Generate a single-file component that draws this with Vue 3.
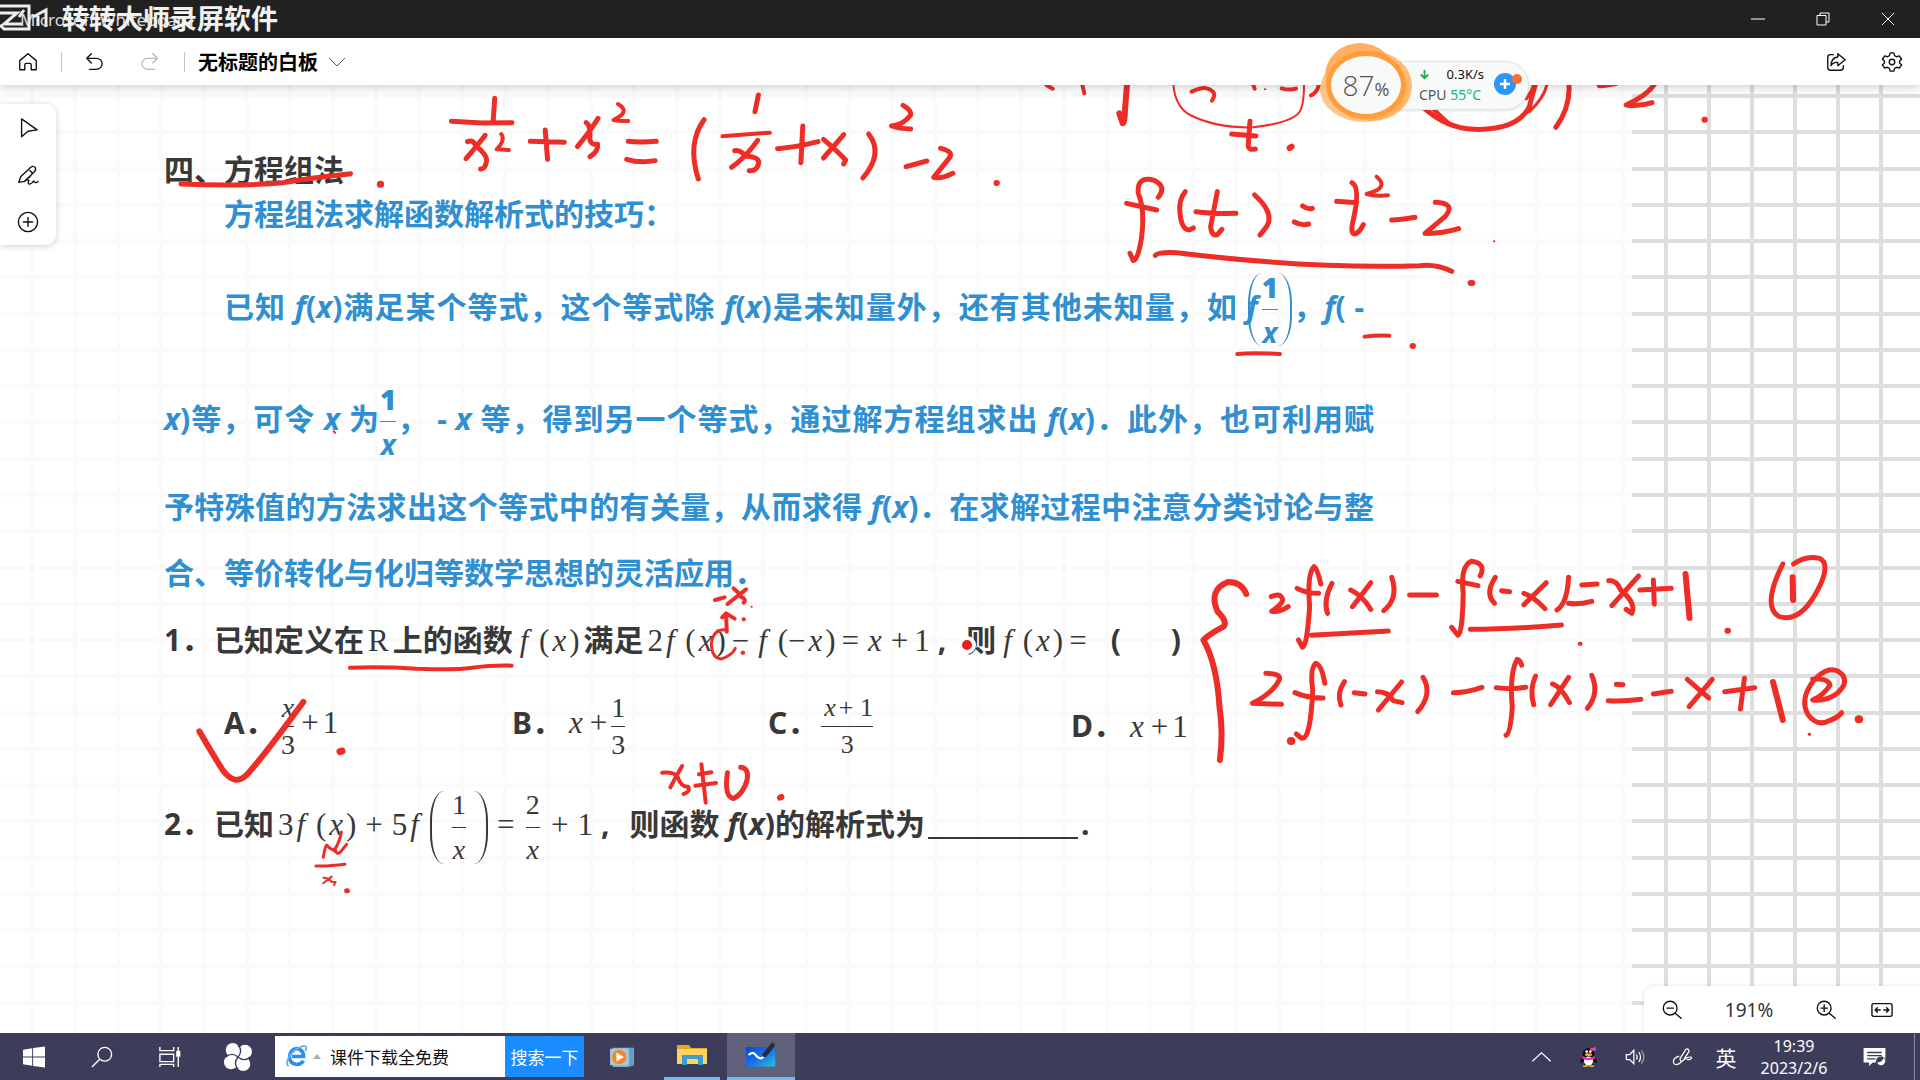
<script setup>
import {ref} from "vue";

const boardName = ref("无标题的白板")
const keyword = ref("课件下载全免费")

// 网格线
const cols = Array.from({length: 90}, (_, i) => 32 + i * 43)
const rows = Array.from({length: 60}, (_, i) => Math.round(11 + i * 36.27))

// 笔迹: 每组有自己的原点和比例, w 为笔宽, d 为路径
const inkList = [
  {
    origin: "translate(0 -85) scale(.3333)",
    strokes: [
      {w: 5, d: "M543 552Q720 560 850 548Q920 535 1052 521"},
      {w: 7, d: "M1141 553h1"},
    ]
  },
  {
    origin: "translate(440 -5) scale(.3827 .3333)",
    strokes: [
      {w: 5, d: "M30 124L110 129L188 128M143 55L139 122"},
      {w: 5, d: "M72 185Q88 178 93 197Q122 222 122 242Q118 268 106 267M118 166L98 195L68 236"},
      {w: 4, d: "M160 162Q172 180 148 208L180 210"},
      {w: 5, d: "M236 184L325 187M275 150L281 238"},
      {w: 5, d: "M382 128Q392 135 392 165Q388 196 412 193Q414 215 392 230M413 115Q395 150 359 200"},
      {w: 4, d: "M465 72Q500 95 453 120Q470 124 492 123"},
      {w: 5, d: "M492 184Q520 188 565 184M488 238Q520 250 562 242"},
      {w: 5, d: "M690 119Q645 190 675 297M832 45L823 95"},
      {w: 4, d: "M738 169L862 158"},
      {w: 5, d: "M770 212Q785 208 798 228Q830 230 833 245Q830 275 808 272M830 181Q800 230 762 262"},
      {w: 5, d: "M882 206Q930 202 988 185M948 138L943 248"},
      {w: 5, d: "M1002 178Q1040 215 1060 240L1055 252M1055 164L1002 234"},
      {w: 5, d: "M1120 162Q1160 220 1105 294"},
      {w: 5, d: "M1210 76Q1232 90 1230 105Q1210 135 1180 138Q1200 146 1230 147"},
      {w: 5, d: "M1218 260L1272 243"},
      {w: 5, d: "M1308 205Q1345 215 1330 235L1290 292Q1310 298 1340 280"},
      {w: 6, d: "M1454 309h1"},
    ]
  },
  {
    origin: "translate(1020 -25) scale(.3333)",
    strokes: [
      {w: 4, d: "M80 76L98 86M186 70L193 100M515 95Q545 80 560 85Q595 95 576 122M698 70L704 86"},
      {w: 6, d: "M322 60L315 150Q314 190 308 190L298 160"},
      {w: 2, d: "M460 72Q465 140 510 165Q590 205 700 202Q800 190 830 165Q853 150 852 70M735 88h1"},
      {w: 4, d: "M785 85Q810 92 828 86M897 74Q890 100 873 106"},
      {w: 5, d: "M690 184L685 255Q685 272 706 267M635 222L708 228"},
      {w: 6, d: "M809 264L815 260"},
      {w: 5, d: "M415 412Q440 380 405 362Q350 345 355 400Q375 450 365 530Q355 600 340 602L330 580M320 430L410 450"},
      {w: 5, d: "M496 395Q475 420 480 460Q485 510 508 510L520 504"},
      {w: 5, d: "M592 395L572 500Q575 530 592 524L606 508M528 455Q580 462 648 460"},
      {w: 5, d: "M704 405Q765 460 740 500L720 525"},
      {w: 5, d: "M848 438Q865 450 877 445M823 486Q845 498 866 492"},
      {w: 5, d: "M996 368Q1022 380 1000 480Q990 520 1003 522Q1018 520 1030 494M950 424L1010 428"},
      {w: 4, d: "M1070 350Q1110 385 1040 402Q1070 410 1104 406"},
      {w: 5, d: "M1115 480Q1140 480 1185 472"},
      {w: 5, d: "M1246 427Q1310 430 1275 470L1215 520Q1260 522 1316 506"},
      {w: 5, d: "M406 586Q415 575 470 578Q880 628 1200 617Q1250 612 1295 634"},
      {w: 6, d: "M1352 669h5"},
      {w: 2, d: "M1422 544h1"},
      {w: 4, d: "M652 882Q700 878 780 882M1034 830Q1070 825 1108 827"},
      {w: 6, d: "M1178 858h1"},
    ]
  },
  {
    origin: "translate(1300 -85) scale(.3954 .3333)",
    strokes: [
      {w: 5, d: "M312 322Q370 385 440 388Q550 392 580 320L598 240"},
      {w: 4, d: "M335 325L378 372M592 250Q590 275 572 295"},
      {w: 3, d: "M625 250Q620 290 580 335"},
      {w: 5, d: "M680 250Q685 320 647 382"},
      {w: 5, d: "M898 250Q880 285 825 315Q860 320 890 308M757 257Q770 258 800 250"},
      {w: 6, d: "M1023 359h1"},
    ]
  },
  {
    origin: "translate(150 495) scale(.3333)",
    strokes: [
      {w: 2, d: "M551 -446L556 -442"},
      {w: 4, d: "M600 263Q700 260 800 266Q920 270 960 264Q1030 255 1085 257"},
      {w: 6, d: "M148 454Q180 510 218 570Q255 620 290 585Q340 530 460 366"},
      {w: 7, d: "M570 515L576 513"},
      {w: 3, d: "M574 756Q570 785 552 812M520 832Q525 800 530 795Q545 815 556 805Q556 825 570 818L590 793"},
      {w: 3, d: "M498 858Q530 860 585 853"},
      {w: 2, d: "M520 893Q540 895 545 906L557 906L552 915M545 890L520 910"},
      {w: 5, d: "M590 932h2"},
    ]
  },
  {
    origin: "translate(640 495) scale(.3571 .3333)",
    strokes: [
      {w: 4, d: "M210 60L237 52M262 25Q275 35 282 50Q300 58 290 68M297 28L245 72"},
      {w: 2, d: "M312 80h1"},
      {w: 4, d: "M243 155L241 103M230 112L241 100L265 116"},
      {w: 4, d: "M290 118h1M287 218h2"},
      {w: 3, d: "M243 150Q205 145 200 190Q200 235 228 237Q260 225 267 205"},
      {w: 4, d: "M62 578Q95 575 105 590Q115 622 135 620Q142 635 122 642M118 558Q100 590 85 622"},
      {w: 4, d: "M155 617L213 609M165 583L200 577M172 553L184 668"},
      {w: 5, d: "M245 578Q235 650 262 656Q290 640 300 600Q306 565 282 562"},
      {w: 6, d: "M392 653L396 651"},
    ]
  },
  {
    origin: "translate(1190 455) scale(.4464 .3333)",
    strokes: [
      {w: 6, d: "M126 162Q115 125 85 126Q40 150 62 215Q85 245 75 260Q40 285 30 300Q60 370 66 500Q75 580 67 660"},
      {w: 5, d: "M182 170Q200 160 205 172Q215 185 183 214Q200 218 220 200"},
      {w: 5, d: "M293 132Q285 85 278 80Q262 100 268 200Q262 320 252 322L243 300M240 145Q260 160 288 160"},
      {w: 5, d: "M318 130Q298 180 308 220M360 150Q385 165 405 208M405 128L364 200M452 112Q468 175 434 212M492 165L552 165"},
      {w: 5, d: "M272 286L444 273"},
      {w: 5, d: "M650 108Q665 70 630 64Q605 80 612 160Q610 285 600 286L586 262M600 124L645 137"},
      {w: 5, d: "M684 112Q660 160 682 190M698 152L716 155M748 160Q770 170 795 206M798 128L748 194"},
      {w: 5, d: "M848 112Q845 190 822 210M878 135L912 132M848 190Q870 195 900 184"},
      {w: 5, d: "M628 268Q720 268 832 255"},
      {w: 4, d: "M873 311h2"},
      {w: 5, d: "M938 122Q955 120 965 150Q1000 190 990 220L977 208M1005 108L945 197M1008 150L1078 145M1038 120L1040 192"},
      {w: 6, d: "M1110 102L1119 234"},
      {w: 6, d: "M1204 272h1"},
      {w: 5, d: "M1328 72Q1280 200 1320 230Q1370 250 1410 140Q1435 70 1410 55Q1380 45 1352 72"},
      {w: 6, d: "M1350 112L1351 180"},
      {w: 5, d: "M170 400Q205 400 200 420Q185 460 140 490L205 493"},
      {w: 5, d: "M302 430Q295 375 282 370Q268 385 275 450Q270 600 250 595L238 582M235 458Q265 475 298 474"},
      {w: 5, d: "M346 425Q328 460 338 495M368 458L392 462M420 455Q445 455 455 482L475 488M474 426L422 510M522 412Q545 460 510 515"},
      {w: 5, d: "M590 458Q620 458 654 442"},
      {w: 5, d: "M743 376Q740 360 733 358Q715 400 722 500Q718 580 708 586M686 443Q720 450 752 442"},
      {w: 5, d: "M774 408Q760 450 770 494M812 432Q830 440 850 488M848 412L808 494M900 406Q918 460 890 505"},
      {w: 5, d: "M955 433L970 434M937 482Q970 485 1010 478M1038 462L1078 454"},
      {w: 5, d: "M1114 418L1162 474M1170 418L1118 500M1198 455L1265 443M1242 415L1233 507"},
      {w: 6, d: "M1306 426L1328 540"},
      {w: 5, d: "M1395 418Q1428 412 1434 435Q1420 465 1395 480Q1425 485 1450 460Q1475 430 1462 405Q1435 365 1395 425Q1365 480 1385 525Q1405 560 1430 543Q1450 535 1460 518"},
      {w: 8, d: "M1498 538h1"},
      {w: 8, d: "M226 603h1"},
      {w: 3, d: "M1387 583h1"},
    ]
  },
]
</script>

<template>
  <div class="app">
    <header class="title-bar">
      <span class="app-name">Microsoft Whiteboard</span>
      <div class="watermark">
        <svg class="watermark-logo" viewBox="0 0 50 30">
          <path d="M0 4H29V27H4L0 23M0 11H17L4 22H22M24 8L19 15M33 15L46 8V25M38 14V24" />
        </svg>
        <span>转转大师录屏软件</span>
      </div>
      <div class="window-btns">
        <button aria-label="最小化"><svg viewBox="0 0 16 16"><path d="M1 8H15" /></svg></button>
        <button aria-label="还原"><svg viewBox="0 0 16 16"><path d="M2 4.5H11V14H2ZM5 4.500V2H14V11H11" /></svg></button>
        <button aria-label="关闭"><svg viewBox="0 0 16 16"><path d="M2 2L14 14M14 2L2 14" /></svg></button>
      </div>
    </header>

    <nav class="tool-bar">
      <button class="tool" aria-label="主页">
        <svg viewBox="0 0 24 24"><path d="M3 10.500L12 3L21 10.500V20.500H15.500V15Q15.500 13.500 14 13.500H10Q8.500 13.500 8.500 15V20.500H3Z" /></svg>
      </button>
      <i class="split"></i>
      <button class="tool" aria-label="撤消">
        <svg viewBox="0 0 24 24"><path d="M8 3L3 8L8 13M3 8H13C22 8 22 20 13 20H6" /></svg>
      </button>
      <button class="tool disabled" aria-label="恢复" disabled>
        <svg viewBox="0 0 24 24"><path d="M14 3L19 8L14 13M19 8H9C0 8 0 20 9 20H16" /></svg>
      </button>
      <i class="split"></i>
      <button class="board-name">
        {{boardName}}
        <svg viewBox="0 0 18 10"><path d="M1 1L9 9L17 1" /></svg>
      </button>
      <div class="tool-right">
        <button class="tool" aria-label="共享">
          <svg viewBox="0 0 24 24"><path d="M9 4H6Q3 4 3 7V18Q3 21 6 21H17Q20 21 20 18V16M14 3L22 9.500L14 16V12.500Q9 12 6.500 16Q7 7 14 6.500Z" /></svg>
        </button>
        <button class="tool" aria-label="设置">
          <svg viewBox="0 0 24 24"><path d="M10 2H14L14.800 5L17 6.300L20 5.400L22.500 9L20.200 11V13L22.500 15L20 18.600L17 17.700L14.800 19L14 22H10L9.200 19L7 17.700L4 18.600L1.500 15L3.800 13V11L1.500 9L4 5.400L7 6.300L9.200 5Z" /><circle cx="12" cy="12" r="3" /></svg>
        </button>
      </div>
    </nav>

    <main class="canvas">
      <svg class="grid">
        <line v-for="x in cols" :key="'c' + x" :x1="x" :x2="x" y1="0" y2="100%" />
        <line v-for="y in rows" :key="'r' + y" x1="0" x2="100%" :y1="y" :y2="y" />
      </svg>

      <article class="paper">
        <h1 class="row title">四、方程组法</h1>
        <h2 class="row tip indent">方程组法求解函数解析式的技巧：</h2>
        <div class="row tip line-a indent justify">已知 <i>f</i>(<i>x</i>)满足某个等式，这个等式除 <i>f</i>(<i>x</i>)是未知量外，还有其他未知量，如 <i>f</i><span class="paren"><span class="frac"><b>1</b><i>x</i></span></span>，<i>f</i>( -</div>
        <div class="row tip line-b justify"><i>x</i>)等，可令 <i>x</i> 为<span class="frac"><b>1</b><i>x</i></span>， - <i>x</i> 等，得到另一个等式，通过解方程组求出 <i>f</i>(<i>x</i>)．此外，也可利用赋</div>
        <div class="row tip line-c justify">予特殊值的方法求出这个等式中的有关量，从而求得 <i>f</i>(<i>x</i>)．在求解过程中注意分类讨论与整</div>
        <div class="row tip line-e">合、等价转化与化归等数学思想的灵活应用．</div>

        <div class="row question line-f">
          <span class="num">1．</span>已知定义在<span class="math">R</span>上的函数<span class="math"><i>f</i> (<i>x</i>)</span>满足<span class="math">2<i>f</i> (<i>x</i>)<s>−</s><i>f</i> (−<i>x</i>)<s>=</s><i>x</i><s>+</s>1</span><span class="comma">,</span>则<span class="math"><i>f</i> (<i>x</i>)<s>=</s></span><span class="blank">(</span>)
        </div>
        <div class="row options">
          <div>A．<span class="math"><span class="frac"><i>x</i><b>3</b></span><s>+</s>1</span></div>
          <div>B．<span class="math"><i>x</i><s>+</s><span class="frac"><b>1</b><b>3</b></span></span></div>
          <div>C．<span class="math"><span class="frac small"><span><i>x</i>+ 1</span><b>3</b></span></span></div>
          <div>D．<span class="math"><i>x</i><s>+</s>1</span></div>
        </div>
        <div class="row question line-d">
          <span class="num">2．</span>已知<span class="math">3<i>f</i> (<i>x</i>)<s>+</s>5<i>f</i> <span class="paren"><span class="frac"><b>1</b><i>x</i></span></span><s>=</s><span class="frac"><b>2</b><i>x</i></span><s>+</s>1</span><span class="comma">,</span>则函数 <i>f</i>(<i>x</i>)的解析式为<span class="fill"></span>.
        </div>
      </article>

      <svg class="ink">
        <g v-for="(item, i) in inkList" :key="i" :transform="item.origin">
          <path v-for="(s, k) in item.strokes" :key="k" :d="s.d" :stroke-width="s.w" vector-effect="non-scaling-stroke" />
        </g>
        <circle class="pen-dot" cx="967" cy="560" r="7" />
      </svg>

      <aside class="side-tools">
        <button class="tool" aria-label="选择"><svg viewBox="0 0 24 24"><path d="M5 2L22 14L12 15.500L5 21.500Z" /></svg></button>
        <button class="tool" aria-label="墨迹书写"><svg viewBox="0 0 24 24"><path d="M2 20L4 14L15 3.500Q18 1.500 20 4Q21 6 19 8.500L8 19ZM14 7L17 10M17 10L13 15M8 19Q12 16 13 18Q11 22 14 22Q17 21 18 18.500Q20 22 23 19" /></svg></button>
        <button class="tool" aria-label="创建"><svg viewBox="0 0 24 24"><circle cx="12" cy="12" r="10.500" /><path d="M12 7V17M7 12H17" /></svg></button>
      </aside>

      <div class="zoom-bar">
        <button class="tool" aria-label="缩小"><svg viewBox="0 0 24 24"><circle cx="10" cy="10" r="7.500" /><path d="M15.500 15.500L22 21M6.500 10H13.500" /></svg></button>
        <span class="zoom-value">191%</span>
        <button class="tool" aria-label="放大"><svg viewBox="0 0 24 24"><circle cx="10" cy="10" r="7.500" /><path d="M15.500 15.500L22 21M6.500 10H13.500M10 6.500V13.500" /></svg></button>
        <button class="tool" aria-label="适应屏幕"><svg viewBox="0 0 24 24"><rect x="1" y="5" width="22" height="14" rx="2" /><path d="M10 12H4.500M7 9.500L4.500 12L7 14.500M14 12H19.500M17 9.500L19.500 12L17 14.500" /></svg></button>
      </div>
    </main>

    <div class="monitor">
      <div class="monitor-pill">
        <div class="stat"><svg viewBox="0 0 12 12"><path d="M6 1V10M2 6L6 10L10 6" /></svg><span>0.3K/s</span></div>
        <div class="cpu">CPU <em>55°C</em></div>
      </div>
      <svg class="ball" viewBox="0 0 92 80">
        <ellipse cx="40" cy="33" rx="35" ry="33" fill="#ff9a3c" opacity=".8" />
        <ellipse cx="52" cy="43" rx="40" ry="35" fill="#ffa64d" opacity=".75" />
        <ellipse cx="44" cy="46" rx="44" ry="33" fill="#ffac58" opacity=".7" />
        <ellipse cx="46" cy="42" rx="40" ry="34" fill="#ff9d3a" />
        <ellipse cx="46" cy="42" rx="35" ry="29" fill="#f7faf9" />
      </svg>
      <div class="percent">87<small>%</small></div>
      <svg class="plus" viewBox="0 0 30 30">
        <circle cx="13" cy="16" r="11" fill="#2b95f8" />
        <path d="M13 11V21M8 16H18" stroke="#fff" stroke-width="2.500" />
        <circle cx="25" cy="11" r="5" fill="#ff6a35" />
      </svg>
    </div>

    <footer class="task-bar">
      <button class="task" aria-label="开始">
        <svg viewBox="0 0 24 24" fill="#fff"><path d="M0 4L10 2.500V11.500H0ZM11 2.300L24 .5V11.500H11ZM0 12.500H10V21.500L0 20ZM11 12.500H24V23.500L11 21.700Z" /></svg>
      </button>
      <button class="task" aria-label="搜索">
        <svg viewBox="0 0 24 24" class="line"><circle cx="15" cy="9" r="7.500" /><path d="M9.500 14.500L1 23" /></svg>
      </button>
      <button class="task" aria-label="任务视图">
        <svg viewBox="0 0 24 24" class="line"><path d="M1 1V5H16V1M1 9H16V17H1ZM1 23V20H16V23M21 1V23" /><rect x="19.500" y="6" width="3" height="5" fill="#fff" /></svg>
      </button>
      <button class="task" aria-label="浏览器">
        <svg class="clover" viewBox="0 0 32 32">
          <circle v-for="p in [[10, 8], [24, 10], [22, 24], [8, 22]]" :key="p.join()" :cx="p[0]" :cy="p[1]" r="8" />
          <circle cx="16" cy="16" r="5" />
          <path class="swirl" d="M16 16Q22 9 16 2M16 16Q23 22 30 16M16 16Q10 23 16 30M16 16Q9 10 2 16" />
        </svg>
      </button>
      <form class="search" @submit.prevent>
        <svg class="ie" viewBox="0 0 26 26">
          <path d="M21 18Q18 22 13 22Q5 21 5 13Q6 5 13 4Q21 5 21 13H8" />
          <path class="ring" d="M4 24Q0 22 5 13Q12 3 21 1Q26 1 23 7" />
        </svg>
        <i class="up"></i>
        <input v-model="keyword" type="text" aria-label="搜索内容">
        <button>搜索一下</button>
      </form>
      <button class="task media" aria-label="播放器">
        <svg viewBox="0 0 28 24"><path d="M4 2H27V21L20 23H4Z" fill="#7fb3d6" /><path d="M23 2V22M25 2V21" stroke="#4d87b0" /><rect x="1" y="3" width="20" height="18" fill="#a5cbe4" /><circle cx="11" cy="12" r="8" fill="#f08a2c" /><path d="M8 7L16 12L8 17Z" fill="#fff" /></svg>
      </button>
      <button class="task open" aria-label="文件资源管理器">
        <svg viewBox="0 0 32 24"><path d="M1 2H13L15 5H31V21H1Z" fill="#e5a91c" /><path d="M1 6H31V21H1Z" fill="#fcd462" /><path d="M6 22V12H27V22H22V16H11V22Z" fill="#3f9bd2" /></svg>
      </button>
      <button class="task open active" aria-label="白板">
        <svg viewBox="0 0 36 28"><defs><linearGradient id="wb" x2="1" y2="1"><stop stop-color="#0b45d8" /><stop offset=".5" stop-color="#1570ef" /><stop offset="1" stop-color="#25c5d6" /></linearGradient></defs><rect x="1" y="5" width="33" height="22" fill="url(#wb)" /><path d="M4 14Q9 9 12 14Q17 21 22 15" stroke="#fff" stroke-width="2.500" fill="none" /><path d="M22 14L31 3" stroke="#2a2c33" stroke-width="5" stroke-linecap="round" /></svg>
      </button>
      <div class="tray">
        <button class="tray-btn" aria-label="显示隐藏的图标"><svg viewBox="0 0 24 24" class="line"><path d="M1 17L12 7L23 17" /></svg></button>
        <button class="tray-btn" aria-label="QQ">
          <svg viewBox="0 0 20 22"><ellipse cx="10" cy="8" rx="6.500" ry="7" fill="#111" /><path d="M4 10Q0 15 1 18L5 16V20H15V16L19 18Q20 14 16 10Z" fill="#111" /><ellipse cx="10" cy="15.500" rx="5" ry="5" fill="#fff" /><path d="M3 10Q10 14 17 10V13Q10 16 3 13Z" fill="#f0329a" /><ellipse cx="10" cy="8.500" rx="4" ry="1.500" fill="#f6a52b" /><circle cx="8" cy="5" r="1.500" fill="#fff" /><circle cx="12" cy="5" r="1.500" fill="#fff" /><path d="M11 2L18 0V4L13 4Z" fill="#ff3cab" /><path d="M4 21H9M11 21H16" stroke="#f6a52b" stroke-width="2" /></svg>
        </button>
        <button class="tray-btn" aria-label="音量"><svg viewBox="0 0 24 24" class="line"><path d="M1 9H5L10 4V20L5 15H1ZM13 9Q15 12 13 15M16 6Q20 12 16 18" /><path d="M19 4Q25 12 19 20" opacity=".5" /></svg></button>
        <button class="tray-btn" aria-label="手写笔"><svg viewBox="0 0 24 24" class="line"><path d="M10 18L9 14L16 3Q19 1 20 5L13 16ZM8 11Q1 13 1 18Q2 23 8 20Q14 15 17 13Q22 11 23 13Q22 16 17 15" /></svg></button>
        <span class="lang">英</span>
        <div class="clock"><span>19:39</span><span>2023/2/6</span></div>
        <button class="tray-btn notice" aria-label="通知"><svg viewBox="0 0 24 22"><path d="M0 1H24V17H10L6 21V17H0Z" fill="#fff" /><path d="M4 6H20M4 9.500H20M4 13H13" stroke="#3b3d5a" stroke-width="1.500" /><circle cx="19" cy="16" r="5.500" fill="#3b3d5a" /><path d="M22 12A4.500 4.500 0 1 1 15 17Q20 17 22 12Z" fill="#fff" /></svg></button>
        <i class="desktop-edge"></i>
      </div>
    </footer>
  </div>
</template>

<style>
body {
  margin: 0;
}
</style>

<style scoped>
.app {
  position: relative;
  display: flex;
  flex-direction: column;
  min-height: 100vh;
  overflow: hidden;
  font-family: "Noto Sans", "Noto Sans CJK SC", sans-serif;
  background: #fff;
}
button {
  padding: 0;
  border: none;
  background: none;
  font-family: inherit;
  color: inherit;
}
svg {
  flex-shrink: 0;
}
.title-bar {
  position: relative;
  display: flex;
  align-items: center;
  height: 38px;
  background: #212121;
  color: #fff;
}
.app-name {
  margin-left: 20px;
  font-size: 17px;
  color: #ddd;
}
/* 录屏水印盖在窗口标题上 */
.watermark {
  position: absolute;
  left: 0;
  top: 0;
  display: flex;
  align-items: center;
  gap: 12px;
  height: 34px;
  font-size: 27px;
  font-weight: 700;
  color: #f2f2f2;
}
.watermark-logo {
  width: 50px;
  height: 30px;
  fill: none;
  stroke: #eee;
  stroke-width: 3;
}
.window-btns {
  display: flex;
  margin-left: auto;
}
.window-btns button {
  display: grid;
  place-items: center;
  width: 65px;
  height: 38px;
}
.window-btns svg {
  width: 16px;
  height: 16px;
  fill: none;
  stroke: #fff;
}
.tool-bar {
  position: relative;
  z-index: 2;
  display: flex;
  align-items: center;
  height: 47px;
  background: #fff;
  box-shadow: 0 2px 10px rgba(0, 0, 0, .2);
}
.tool {
  display: grid;
  place-items: center;
  width: 56px;
  height: 47px;
}
.tool svg {
  width: 24px;
  height: 22px;
  fill: none;
  stroke: #111;
  stroke-width: 1.5;
  stroke-linejoin: round;
  stroke-linecap: round;
}
.disabled svg {
  stroke: #bbb;
}
.split {
  width: 1px;
  height: 20px;
  margin: 0 5px;
  background: #c4c4c4;
}
.board-name {
  display: flex;
  align-items: center;
  gap: 10px;
  margin-left: 8px;
  font-size: 20px;
  font-weight: 700;
  color: #000;
}
.board-name svg {
  width: 18px;
  height: 10px;
  fill: none;
  stroke: #555;
}
.tool-right {
  display: flex;
  margin-left: auto;
}
.canvas {
  position: relative;
  display: flex;
  flex-direction: column;
  flex: 1;
  overflow: hidden;
}
.grid,
.ink {
  position: absolute;
  left: 0;
  top: 0;
  width: 100%;
  height: 100%;
}
.grid {
  stroke: #dedede;
  stroke-width: 4;
}
.paper {
  position: relative;
  box-sizing: border-box;
  flex: 1;
  width: 85%;
  padding: 63px 0 0 164px;
  background: rgba(255, 255, 255, .84);
  font-size: 30px;
  font-weight: 700;
  white-space: nowrap;
}
.row {
  margin: 0;
  font-size: 30px;
  line-height: 44px;
  color: #383838;
}
.tip {
  color: #2f8fd0;
}
.indent {
  padding-left: 60px;
}
.justify {
  width: 1210px;
  box-sizing: border-box;
  text-align: justify;
  text-align-last: justify;
  white-space: normal;
}
.line-a {
  height: 142px;
  padding-right: 10px;
  line-height: 142px;
}
.line-b {
  height: 82px;
  line-height: 82px;
}
.line-c {
  height: 94px;
  line-height: 94px;
}
.line-d {
  line-height: 128px;
}
.line-e {
  line-height: 38px;
}
.line-f {
  height: 100px;
  line-height: 96px;
}
.frac {
  display: inline-flex;
  flex-direction: column;
  align-items: center;
  margin: -8px 0;
  vertical-align: middle;
  font-size: 28px;
  line-height: 44px;
  text-align-last: center;
}
.frac > :first-child {
  border-bottom: 1px solid currentColor;
}
.paren {
  display: inline-flex;
  vertical-align: middle;
}
.paren::before,
.paren::after {
  content: "";
  width: 12px;
}
.paren::before {
  border-left: 2px solid currentColor;
  border-radius: 14px 0 0 14px / 30px 0 0 30px;
}
.paren::after {
  border-right: 2px solid currentColor;
  border-radius: 0 14px 14px 0 / 0 30px 30px 0;
}
.tip .paren {
  margin-left: -10px;
}
.math {
  margin: 0 4px;
  font-family: "Liberation Serif", serif;
  font-size: 31px;
  font-weight: 400;
}
.math i {
  margin: 0 3px;
}
.math .paren .frac {
  padding: 0 6px;
}
.math b {
  font-weight: 400;
}
.math s {
  margin: 0 6px;
  text-decoration: none;
}
.line-d .math s {
  margin: 0 9px;
}
.num {
  display: inline-block;
  width: 50px;
}
.comma {
  margin: 0 20px 0 4px;
}
.blank {
  margin: 0 50px 0 14px;
}
.options {
  display: grid;
  grid-template-columns: 288px 256px 303px 1fr;
  align-items: center;
  height: 68px;
  padding-left: 60px;
}
.options .frac {
  line-height: 36px;
}
.options .math s {
  margin: 0 4px;
}
.options .small {
  font-size: 26px;
}
.fill {
  display: inline-block;
  width: 150px;
  margin: 0 3px;
  border-bottom: 2px solid #383838;
  vertical-align: -4px;
}
.ink {
  pointer-events: none;
}
.ink path {
  fill: none;
  stroke: #ee2d27;
  stroke-linecap: round;
  stroke-linejoin: round;
}
.pen-dot {
  fill: #e8201c;
  stroke: #fff;
  stroke-width: 4;
}
.side-tools {
  position: absolute;
  left: 0;
  top: 19px;
  display: flex;
  flex-direction: column;
  width: 56px;
  background: #fff;
  border-radius: 0 10px 10px 0;
  box-shadow: 0 1px 6px rgba(0, 0, 0, .2);
}
.zoom-bar {
  position: absolute;
  right: 0;
  bottom: 0;
  display: flex;
  align-items: center;
  box-sizing: border-box;
  width: 276px;
  height: 47px;
  padding-right: 10px;
  background: #fff;
  border-radius: 10px 0 0 0;
  box-shadow: 0 0 4px rgba(0, 0, 0, .12);
}
.zoom-value {
  flex: 1;
  text-align: center;
  font-size: 19px;
  color: #333;
}
.monitor {
  position: absolute;
  z-index: 3;
  right: 389px;
  top: 43px;
  width: 211px;
  height: 80px;
}
.ball {
  position: absolute;
  left: 0;
  top: 0;
  width: 92px;
  height: 80px;
}
.monitor-pill {
  position: absolute;
  left: 46px;
  top: 18px;
  box-sizing: border-box;
  width: 163px;
  height: 49px;
  padding: 3px 44px 0 52px;
  background: #f8fafa;
  border: 1px solid #e4e6e6;
  border-radius: 0 24px 24px 0;
  font-size: 13px;
  line-height: 18px;
  box-shadow: 0 1px 3px rgba(0, 0, 0, .12);
}
.stat {
  display: flex;
  align-items: center;
  justify-content: space-between;
  color: #111;
}
.stat svg {
  width: 11px;
  height: 11px;
  fill: none;
  stroke: #1faa54;
  stroke-width: 2;
}
.cpu {
  font-size: 14px;
  line-height: 24px;
  color: #555;
  white-space: nowrap;
}
.cpu em {
  font-style: normal;
  color: #22b864;
}
.percent {
  position: absolute;
  left: 0;
  top: 22px;
  width: 92px;
  text-align: center;
  font-family: "Open Sans", sans-serif;
  font-weight: 300;
  font-size: 28px;
  line-height: 40px;
  color: #555;
}
.percent small {
  font-size: 18px;
  font-weight: 400;
}
.plus {
  position: absolute;
  left: 172px;
  top: 25px;
  width: 30px;
  height: 30px;
}
.task-bar {
  position: relative;
  z-index: 2;
  display: flex;
  align-items: center;
  height: 47px;
  background: #3b3d5a;
  color: #fff;
}
.task {
  box-sizing: border-box;
  display: grid;
  place-items: center;
  width: 68px;
  height: 47px;
}
.task svg {
  width: 24px;
  height: 22px;
}
.line {
  fill: none;
  stroke: #fff;
  stroke-width: 1.5;
}
.task .clover {
  width: 34px;
  height: 28px;
  fill: #fff;
}
.clover .swirl {
  fill: none;
  stroke: #3b3d5a;
  stroke-width: 1.5;
}
.search {
  display: flex;
  align-items: center;
  box-sizing: border-box;
  width: 309px;
  height: 41px;
  margin-left: 3px;
  padding-left: 9px;
  background: #fff;
}
.ie {
  width: 25px;
  height: 23px;
  fill: none;
  stroke: #2b8fe8;
  stroke-width: 4;
}
.ie .ring {
  stroke: #5ab4f5;
  stroke-width: 2;
}
.up {
  margin: 0 9px 0 4px;
  border: 4px solid transparent;
  border-top: none;
  border-bottom: 5px solid #aaa;
}
.search input {
  flex: 1;
  min-width: 0;
  padding: 0;
  border: none;
  outline: none;
  background: none;
  font-family: inherit;
  font-size: 17px;
  color: #111;
}
.search button {
  width: 79px;
  height: 41px;
  background: #1a8cff;
  font-size: 17px;
  color: #fff;
}
.media {
  margin-left: 4px;
}
.task.media svg {
  width: 26px;
}
.open {
  border-bottom: 3px solid #76b9ed;
}
.task.open svg {
  width: 32px;
  height: 26px;
}
.open:not(.active) {
  width: 56px;
  margin: 0 7px 0 8px;
}
.active {
  background: #5f6079;
}
.tray {
  display: flex;
  align-items: center;
  height: 100%;
  margin-left: auto;
}
.tray-btn {
  display: grid;
  place-items: center;
  width: 47px;
  height: 47px;
}
.tray-btn svg {
  width: 23px;
  height: 20px;
}
.lang {
  width: 40px;
  text-align: center;
  font-size: 21px;
}
.clock {
  display: flex;
  flex-direction: column;
  width: 96px;
  text-align: center;
  font-size: 16px;
  line-height: 22px;
}
.notice {
  width: 64px;
}
.desktop-edge {
  width: 5px;
  height: 100%;
  margin-left: 8px;
  border-left: 1px solid #8789a0;
}
</style>
